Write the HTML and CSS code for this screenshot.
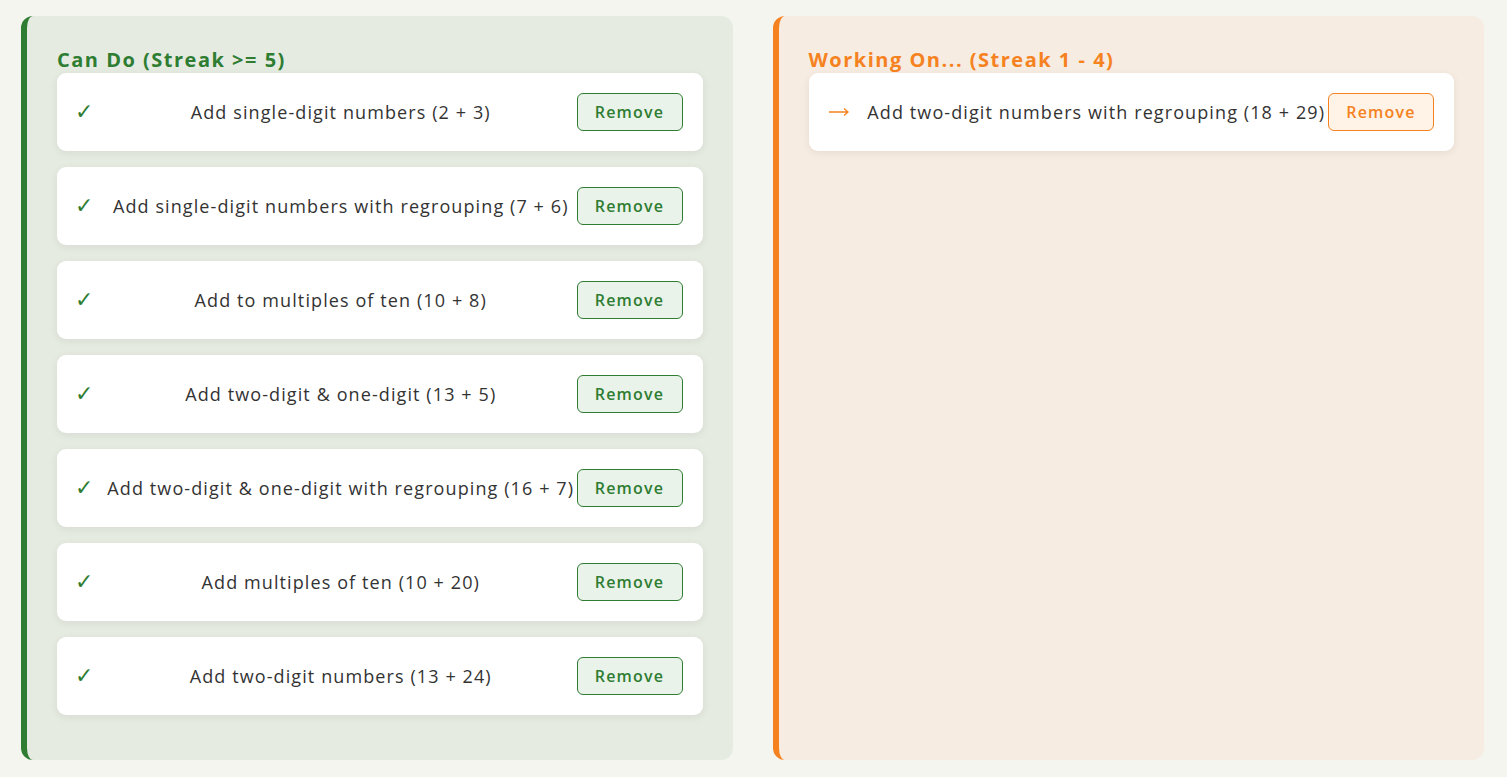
FILE: index.html
```html
<!DOCTYPE html>
<html lang="en">

<head>
    <meta charset="UTF-8">
    <meta name="viewport" content="width=device-width, initial-scale=1.0">
    <title>Skills Board</title>

    <link rel="stylesheet" href="styles.css">
</head>

<body>
    <div class="board">
        <div class="column canDo">
            <h2>Can Do (Streak &gt;= 5)</h2>
            <div class="skill">
                <span class="mark">&#10003;</span>
                <span class="skillName">Add single-digit numbers (2 + 3)</span>
                <button class="removeBtn">Remove</button>
            </div>
            <div class="skill">
                <span class="mark">&#10003;</span>
                <span class="skillName">Add single-digit numbers with regrouping (7 + 6)</span>
                <button class="removeBtn">Remove</button>
            </div>
            <div class="skill">
                <span class="mark">&#10003;</span>
                <span class="skillName">Add to multiples of ten (10 + 8)</span>
                <button class="removeBtn">Remove</button>
            </div>
            <div class="skill">
                <span class="mark">&#10003;</span>
                <span class="skillName">Add two-digit &amp; one-digit (13 + 5)</span>
                <button class="removeBtn">Remove</button>
            </div>
            <div class="skill">
                <span class="mark">&#10003;</span>
                <span class="skillName">Add two-digit &amp; one-digit with regrouping (16 + 7)</span>
                <button class="removeBtn">Remove</button>
            </div>
            <div class="skill">
                <span class="mark">&#10003;</span>
                <span class="skillName">Add multiples of ten (10 + 20)</span>
                <button class="removeBtn">Remove</button>
            </div>
            <div class="skill">
                <span class="mark">&#10003;</span>
                <span class="skillName">Add two-digit numbers (13 + 24)</span>
                <button class="removeBtn">Remove</button>
            </div>
        </div>

        <div class="column workingOn">
            <h2>Working On... (Streak 1 - 4)</h2>
            <div class="skill">
                <span class="mark">
                    <svg width="20" height="10" viewBox="0 0 20 10">
                        <path d="M0 5 H19 M15 1.5 L19 5 L15 8.5" fill="none" stroke="currentColor" stroke-width="1.3" />
                    </svg>
                </span>
                <span class="skillName">Add two-digit numbers with regrouping (18 + 29)</span>
                <button class="removeBtn">Remove</button>
            </div>
        </div>
    </div>
</body>

</html>
```

FILE: styles.css
```css
body {
    font-family: 'Open Sans', 'Liberation Sans', sans-serif;
    background-color: #f4f5ef;
    color: #333;
    margin: 0;
    padding: 0;
}

.board {
    display: grid;
    grid-template-columns: minmax(0, 1fr) minmax(0, 1fr);
    gap: 40px;
    padding: 16px 23px 16px 21px;
}

.column {
    border-radius: 12px;
    padding: 30px 30px 29px 30px;
    border-left: 6px solid;
}

.column h2 {
    margin: 0;
    font-size: 20px;
    line-height: 27px;
    font-weight: 700;
    letter-spacing: 1.5px;
}

.canDo {
    background-color: #e6ebe2;
    border-color: #2e7d32;
}

.canDo h2 {
    color: #2e7d32;
}

.workingOn {
    background-color: #f6ece1;
    border-color: #f5821f;
}

.workingOn h2 {
    color: #f5821f;
}

.skill {
    display: flex;
    align-items: center;
    background-color: #fff;
    border-radius: 9px;
    padding: 20px;
    margin-bottom: 16px;
    box-shadow: 0 2px 8px rgba(0, 0, 0, 0.07);
}

.mark {
    width: 16px;
    margin-right: 14px;
    margin-left: -2px;
    font-family: 'DejaVu Sans', sans-serif;
    font-size: 22px;
    line-height: 1;
}

.canDo .mark {
    color: #2e7d32;
}

.workingOn .mark {
    display: flex;
    width: 20px;
    margin-left: 0;
    margin-right: 16px;
    color: #f5821f;
}

.skillName {
    flex: 1;
    text-align: center;
    font-size: 18px;
    letter-spacing: 1.1px;
    white-space: nowrap;
}

.removeBtn {
    flex-shrink: 0;
    width: 106px;
    height: 38px;
    font-family: inherit;
    font-size: 16px;
    font-weight: 600;
    letter-spacing: 1.2px;
    border-radius: 6px;
    border: 1px solid;
    cursor: pointer;
}

.canDo .removeBtn {
    color: #2e7d32;
    background-color: #eaf3ea;
    border-color: #2e7d32;
}

.workingOn .removeBtn {
    color: #f5821f;
    background-color: #fff2e6;
    border-color: #f5821f;
}
```
